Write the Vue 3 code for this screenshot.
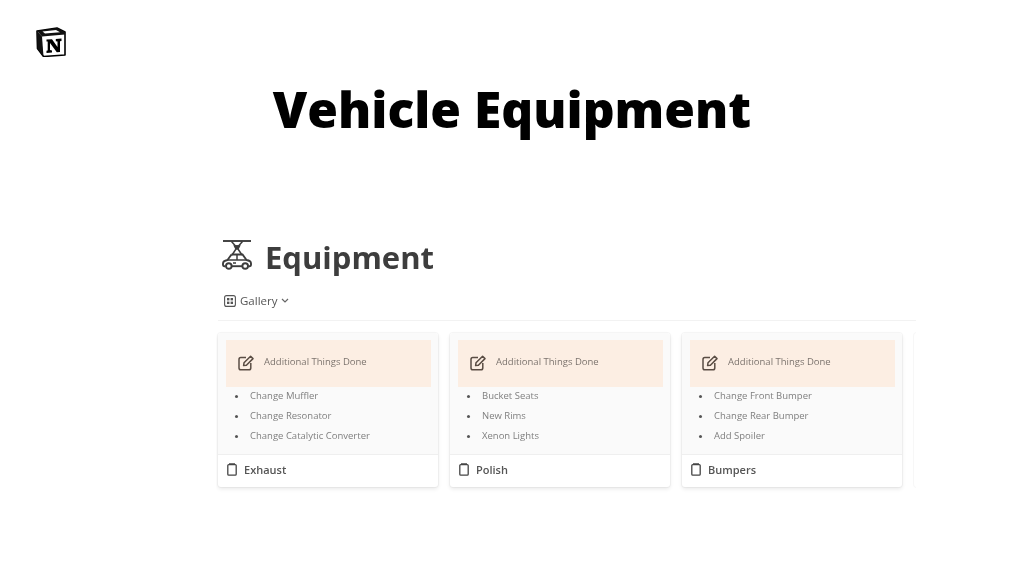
<script setup>
const cards = [
  { name: "Exhaust", items: ["Change Muffler", "Change Resonator", "Change Catalytic Converter"] },
  { name: "Polish", items: ["Bucket Seats", "New Rims", "Xenon Lights"] },
  { name: "Bumpers", items: ["Change Front Bumper", "Change Rear Bumper", "Add Spoiler"] },
];
</script>

<template>
  <div class="page">
    <svg class="logo" viewBox="0 0 30 30" width="30" height="30">
      <path d="M1 4 L21 1 L29 5 L29 28 L7.5 29.5 L1.5 21.5 Z" fill="#fff" stroke="#000" stroke-width="1.6" stroke-linejoin="round" />
      <path d="M1 4 L6 9.5 L29 7.5 L29 5 L21 1 Z" fill="#111" />
      <path d="M1 4 L1.5 21.5 L7.5 29.5 L6 9.5 Z" fill="#111" />
      <path d="M6.5 4.5 L20 3 L24 5.2 L9 6.6 Z" fill="#fff" />
      <path d="M10.5 12.5 L16 12.2 L21.5 20 L21.5 14.6 L19.8 14.3 L19.8 12 L25.5 11.6 L25.5 13.9 L24 14.2 L24 25 L20.8 25.2 L14 16 L14 23 L16 23.4 L16 25.6 L10.5 26 L10.5 23.8 L11.7 23.4 L11.7 14.6 L10.5 14.5 Z" fill="#000" />
    </svg>

    <h1 class="headline">Vehicle Equipment</h1>

    <div class="content">
      <div class="db-title">
        <svg class="car" viewBox="0 0 30 30" width="30" height="30" fill="none" stroke="#3c3c3c" stroke-width="1.9">
          <path d="M1 1 H29" />
          <path d="M9.5 1.5 L13.5 6 H16.5 L20.5 1.5" stroke-width="1.5" />
          <path d="M12.5 6 H17.5 L16 9 H14 Z" fill="#3c3c3c" stroke-width="1.5" />
          <path d="M14 9 L10 15 M16 9 L20 15" stroke-width="1.5" />
          <path d="M9.5 14.5 H20.5 L24.5 20 C27.5 20.5 29 21.6 29 23.4 V25 C29 25.8 28.5 26.2 27.8 26.2 H26.5" />
          <path d="M9.5 14.5 L5.5 20 C3 20.5 1 21.6 1 23.4 V25 C1 25.8 1.5 26.2 2.2 26.2 H3.5" />
          <path d="M5.5 20 H24.5" stroke-width="1.5" />
          <path d="M15 14.5 V20" stroke-width="1.5" />
          <path d="M10 26.2 H20" />
          <circle cx="6.8" cy="26" r="2.8" />
          <circle cx="23.2" cy="26" r="2.8" />
          <path d="M11 23 H14" stroke-width="1.5" />
        </svg>
        <span>Equipment</span>
      </div>

      <div class="tabs">
        <svg viewBox="0 0 12 12" width="12" height="12" fill="none" stroke="#555" stroke-width="1.1">
          <rect x="0.6" y="0.6" width="10.8" height="10.8" rx="2" />
          <rect x="3" y="3" width="2.4" height="2.4" fill="#555" stroke="none" />
          <rect x="6.6" y="3" width="2.4" height="2.4" fill="#555" stroke="none" />
          <rect x="3" y="6.6" width="2.4" height="2.4" fill="#555" stroke="none" />
          <rect x="6.6" y="6.6" width="2.4" height="2.4" fill="#555" stroke="none" />
        </svg>
        <span>Gallery</span>
        <svg viewBox="0 0 8 5" width="8" height="5" fill="none" stroke="#666" stroke-width="1.2">
          <path d="M1 1 L4 4 L7 1" />
        </svg>
      </div>

      <div class="gallery">
        <div v-for="card in cards" :key="card.name" class="card">
          <div class="cover">
            <div class="callout">
              <svg viewBox="0 0 16 16" width="16" height="16" fill="none" stroke="#5a4d44" stroke-width="1.5" stroke-linejoin="round">
                <path d="M8 2.6 H2.8 C1.8 2.6 1 3.4 1 4.4 V13 C1 14 1.8 14.8 2.8 14.8 H11 C12 14.8 12.8 14 12.8 13 V8" />
                <path d="M6 7.8 L12.6 1.2 L15 3.6 L8.4 10.2 L5.6 10.6 Z" />
              </svg>
              <span>Additional Things Done</span>
            </div>
            <ul>
              <li v-for="item in card.items" :key="item">{{ item }}</li>
            </ul>
          </div>
          <div class="card-name">
            <svg viewBox="0 0 10 13" width="10" height="13" fill="none" stroke="#444" stroke-width="1.3">
              <rect x="0.8" y="1.6" width="8.4" height="10.6" rx="1" />
              <path d="M2 1 H8" />
            </svg>
            <span>{{ card.name }}</span>
          </div>
        </div>
        <div class="card ghost"></div>
      </div>
    </div>
  </div>
</template>

<style>
html, body {
  margin: 0;
  background: #fff;
}
</style>

<style scoped>
.page {
  position: relative;
  width: 1024px;
  height: 576px;
  overflow: hidden;
  background: #fff;
  font-family: "Open Sans", sans-serif;
}

.logo {
  position: absolute;
  left: 36px;
  top: 27px;
}

.headline {
  margin: 0;
  padding-top: 75px;
  height: 70px;
  text-align: center;
  font-size: 49.7px;
  line-height: 68px;
  font-weight: 800;
  color: #000;
  filter: blur(0.3px);
}

.content {
  width: 700px;
  margin: 95px 0 0 216px;
  filter: blur(0.45px);
}

.db-title {
  display: flex;
  align-items: center;
  gap: 13px;
  height: 30px;
  padding-left: 6px;
  font-size: 31px;
  line-height: 34px;
  font-weight: 700;
  color: #3d3d3d;
}

.db-title span {
  margin-top: 4px;
}

.tabs {
  display: flex;
  align-items: center;
  gap: 4px;
  height: 40px;
  margin: 11px 0 0 2px;
  padding-left: 6px;
  box-sizing: border-box;
  font-size: 11.5px;
  font-weight: 500;
  color: #555;
  border-bottom: 1px solid #f2f2f2;
}

.gallery {
  display: flex;
  gap: 12px;
  padding: 12px 0 12px 2px;
  overflow: hidden;
}

.card {
  flex: none;
  width: 220px;
  height: 154px;
  border-radius: 3px;
  background: #fff;
  box-shadow: 0 0 0 1px rgba(15, 15, 15, 0.04), 0 2px 4px rgba(15, 15, 15, 0.09);
  display: flex;
  flex-direction: column;
  overflow: hidden;
}

.cover {
  height: 122px;
  padding: 7px 7px 0 8px;
  box-sizing: border-box;
  background: #fafafa;
  border-bottom: 1px solid #efefef;
}

.callout {
  display: flex;
  align-items: flex-start;
  gap: 10px;
  height: 47px;
  padding: 15px 0 0 12px;
  box-sizing: border-box;
  background: #fceee3;
  font-size: 9.5px;
  line-height: 12px;
  color: #7c746e;
}

.callout span {
  margin-top: 1px;
}

ul {
  margin: 0;
  padding: 0 0 0 24px;
  list-style: none;
  font-size: 9.5px;
  line-height: 20px;
  color: #7f7f7f;
}

ul li:first-child {
  margin-top: -1px;
}

li {
  position: relative;
}

li::before {
  content: "";
  position: absolute;
  left: -15px;
  top: 9px;
  width: 3px;
  height: 3px;
  border-radius: 50%;
  background: #555;
}

.card-name {
  flex: 1;
  display: flex;
  align-items: center;
  gap: 7px;
  padding: 0 0 3px 9px;
  font-size: 11px;
  font-weight: 600;
  color: #555;
}

.ghost {
  box-shadow: 0 0 0 1px rgba(15, 15, 15, 0.03);
}
</style>
